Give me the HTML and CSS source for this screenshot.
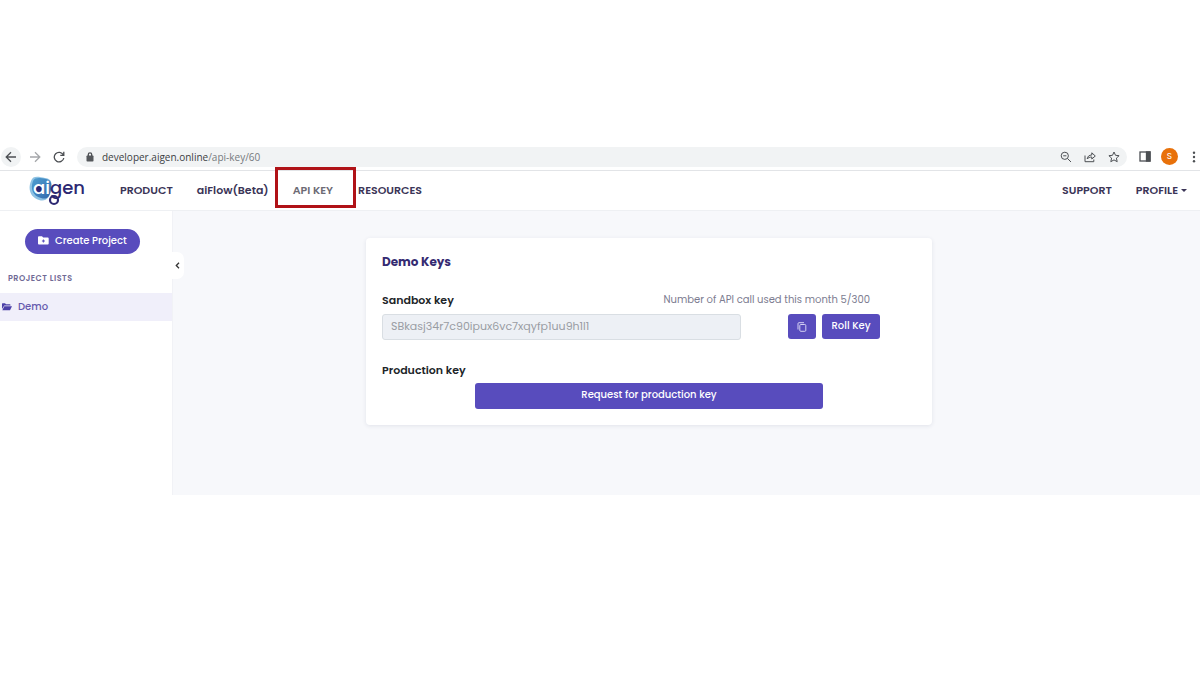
FILE: index.html
```html
<!DOCTYPE html>
<html lang="en">
<head>
  <meta charset="UTF-8" />
  <meta name="viewport" content="width=device-width, initial-scale=1.0" />
  <title>API Key</title>
  <link rel="stylesheet" href="styles.css">
</head>
<body>
  <header class="browser">
    <button class="tool back" aria-label="Back">
      <svg width="12" height="12" viewBox="0 0 12 12"><path d="M11 6H1.5M6 1.2 1.2 6 6 10.8" /></svg>
    </button>
    <button class="tool forward" aria-label="Forward">
      <svg width="12" height="12" viewBox="0 0 12 12"><path d="M1 6h9.5M6 1.2 10.8 6 6 10.8" /></svg>
    </button>
    <button class="tool reload" aria-label="Reload">
      <svg width="12" height="12" viewBox="0 0 12 12"><path d="M10.3 3.8A4.8 4.8 0 1 0 10.8 7M10.8 .8v3.5H7.3" /></svg>
    </button>
    <div class="address">
      <svg class="lock" width="8" height="10" viewBox="0 0 8 10"><rect x="0.5" y="3.5" width="7" height="6" rx="0.8" fill="#54575b" stroke="none" /><path d="M2.3 4V2.6a1.7 1.7 0 0 1 3.4 0V4" /></svg>
      <span class="url">developer.aigen.online<span>/api-key/60</span></span>
      <div class="actions">
        <svg width="12" height="12" viewBox="0 0 12 12"><circle cx="4.8" cy="4.8" r="3.6" /><path d="M7.5 7.5l3.500 3.500M3.200 4.800h3.200" /></svg>
        <svg width="12" height="12" viewBox="0 0 12 12"><path d="M1 4.500v6.200h8.800V8.500M3.200 8C3.500 5.500 5 4 7.800 4V1.800L11.300 5 7.800 8V6C5.600 6 4.200 6.700 3.200 8z" /></svg>
        <svg width="12" height="12" viewBox="0 0 12 12"><path d="M6 1l1.500 3.300 3.600.4-2.700 2.400.8 3.600L6 8.900l-3.200 1.800.8-3.600L.9 4.700l3.600-.4z" /></svg>
      </div>
    </div>
    <svg class="panel" width="12" height="11" viewBox="0 0 12 11"><rect x="1" y="1" width="10" height="9" /><path d="M7.500 1h3.500v9H7.500z" fill="#4c4f53" /></svg>
    <span class="avatar">S</span>
    <svg class="dots" width="4" height="12" viewBox="0 0 4 12"><circle cx="2" cy="1.800" r="1.200" /><circle cx="2" cy="6" r="1.200" /><circle cx="2" cy="10.200" r="1.200" /></svg>
  </header>

  <nav class="navbar">
    <a href="#" class="logo" aria-label="aigen">
      <svg width="58" height="32" viewBox="0 0 58 32">
        <defs>
          <linearGradient id="blob" x1="0" y1="0" x2="1" y2="1">
            <stop offset="0" stop-color="#4f9fd0" />
            <stop offset="1" stop-color="#3268ad" />
          </linearGradient>
        </defs>
        <path d="M3 7C5 1 11 3 17 4c7 1 7 5 6 11-1 9-5 13-12 11C4 24-1 17 3 7z" fill="#8ec2e3" />
        <path d="M5 7c2-4 7-3 13-2 5 1 6 4 5 10-1 8-4 11-10 9C5 22 2 15 5 7z" fill="url(#blob)" />
        <circle cx="11" cy="15" r="3" fill="#2c2872" />
        <circle cx="26" cy="26" r="4" fill="none" stroke="#2c2872" stroke-width="2.200" />
        <text x="5" y="20" class="logo-text">ai<tspan>gen</tspan></text>
      </svg>
    </a>
    <a href="#" class="product">PRODUCT</a>
    <a href="#" class="flow">aiFlow(Beta)</a>
    <a href="#" class="current">API KEY</a>
    <a href="#">RESOURCES</a>
    <div class="nav-right">
      <a href="#">SUPPORT</a>
      <a href="#" class="profile">PROFILE</a>
    </div>
  </nav>

  <div class="layout">
    <aside class="sidebar">
      <button class="create">
        <svg width="11" height="9" viewBox="0 0 11 9"><path d="M0 1.200Q0 .3.900.3H4l1.200 1.300h4.600q.9 0 .9.900v5q0 .9-.9.900H.9q-.9 0-.9-.9z" fill="#fff" /><path d="M5.400 3.500v3M3.900 5h3" stroke="#584cbd" /></svg>
        Create Project
      </button>
      <h2>PROJECT LISTS</h2>
      <a href="#" class="project">
        <svg width="10" height="8" viewBox="0 0 10 8"><path d="M0 6V.8Q0 .2.600.2H3l1 1h3.800q.7 0 .7.700v.6H2.300z" /><path d="M.3 7.300 2.300 3.200H10L8 7.300z" /></svg>
        Demo
      </a>
      <button class="collapse" aria-label="Collapse sidebar">
        <svg width="5" height="7" viewBox="0 0 5 7"><path d="M4 .8 1.300 3.500 4 6.200" /></svg>
      </button>
    </aside>

    <main class="content">
      <section class="card">
        <h1>Demo Keys</h1>
        <div class="key-head">
          <label for="sandbox">Sandbox key</label>
          <span class="usage">Number of API call used this month 5/300</span>
        </div>
        <div class="key-row">
          <input type="text" id="sandbox" value="SBkasj34r7c90ipux6vc7xqyfp1uu9h1l1" readonly>
          <div class="key-buttons">
            <button class="btn copy" aria-label="Copy key">
              <svg width="10" height="10" viewBox="0 0 10 10"><rect x="2.800" y="2.500" width="6" height="6.800" rx="1" /><path d="M1 7.500V1.700Q1 .7 2 .7h5" /></svg>
            </button>
            <button class="btn roll">Roll Key</button>
          </div>
        </div>
        <h3>Production key</h3>
        <button class="btn request">Request for production key</button>
      </section>
    </main>
  </div>
</body>
</html>
```
FILE: styles.css
```css
* {
  box-sizing: border-box;
  margin: 0;
}
body {
  padding-top: 143px;
  background: #fff;
  color: #212529;
  font-family: Poppins, Inter, sans-serif;
  font-size: 11px;
  line-height: 16px;
}
a {
  color: inherit;
  text-decoration: none;
}
button {
  border: 0;
  padding: 0;
  font: inherit;
  cursor: pointer;
}
svg {
  display: block;
  flex: none;
}

/* browser bar */
.browser {
  display: flex;
  align-items: center;
  height: 28px;
  padding-right: 4px;
  border-bottom: 1px solid #e2e4e7;
}
.browser svg {
  fill: none;
  stroke: #4c4f53;
  stroke-width: 1.3;
}
.tool {
  display: flex;
  align-items: center;
  justify-content: center;
  width: 20px;
  height: 20px;
  margin-right: 4px;
  border-radius: 50%;
  background: none;
}
.back {
  margin-left: 1px;
  background: #f1f3f4;
}
.browser .forward svg {
  stroke: #a5a7aa;
}
.address {
  display: flex;
  flex: 1;
  align-items: center;
  height: 20px;
  margin-left: 4px;
  padding: 0 7px 0 9px;
  border-radius: 10px;
  background: #f1f3f4;
}
.url {
  margin-left: 8px;
  color: #3c4043;
  font-family: "Open Sans", sans-serif;
  font-size: 10px;
}
.url span {
  color: #75797d;
}
.browser .actions svg {
  stroke-width: 1;
}
.actions {
  display: flex;
  gap: 12px;
  margin-left: auto;
}
.panel {
  margin: 0 10px 0 12px;
}
.avatar {
  width: 17px;
  height: 17px;
  border-radius: 50%;
  background: #e8710a;
  color: #fff;
  font-size: 9px;
  line-height: 17px;
  text-align: center;
}
.browser .dots {
  margin-left: 14px;
  fill: #4c4f53;
  stroke: none;
}

/* site navigation */
.navbar {
  display: flex;
  align-items: center;
  height: 40px;
  padding: 0 13px 2px 28px;
  border-bottom: 1px solid #eef0f3;
  color: #3b3557;
  font-weight: 600;
}
.logo-text {
  font-size: 18px;
  font-weight: 500;
  fill: #fff;
}
.logo-text tspan {
  fill: #2c2872;
}
.product {
  margin: 0 24px 0 34px;
}
.current {
  position: relative;
  margin: 0 25px 0 24px;
  color: #6d6b75;
}
.current::after {
  content: "";
  position: absolute;
  inset: -15px -23px -10px -18px;
  border: 3px solid #b01217;
}
.nav-right {
  display: flex;
  gap: 24px;
  margin-left: auto;
}
.profile::after {
  content: "";
  display: inline-block;
  margin-left: 3px;
  border: 3px solid transparent;
  border-top-color: #3b3557;
  border-bottom: 0;
  vertical-align: 2px;
}

/* page body */
.layout {
  display: flex;
  min-height: 284px;
}
.sidebar {
  position: relative;
  width: 173px;
  padding-top: 18px;
  border-right: 1px solid #f1f2f6;
}
.create {
  display: flex;
  align-items: center;
  gap: 6px;
  height: 25px;
  margin-left: 25px;
  padding: 0 13px 2px;
  border-radius: 13px;
  background: #584cbd;
  color: #fff;
  font-size: 10px;
  font-weight: 500;
}
.sidebar h2 {
  margin: 17px 0 6px 8px;
  color: #706a96;
  font-size: 8px;
  font-weight: 600;
  letter-spacing: 0.5px;
}
.project {
  display: flex;
  align-items: center;
  gap: 6px;
  height: 28px;
  padding-left: 2px;
  background: #f0effa;
  color: #6459ad;
  font-size: 10px;
  font-weight: 500;
}
.project svg {
  fill: #4c40a8;
}
.collapse {
  position: absolute;
  top: 41px;
  right: -12px;
  display: flex;
  align-items: center;
  justify-content: center;
  width: 14px;
  height: 27px;
  border-radius: 0 7px 7px 0;
  background: #fff;
}
.collapse svg {
  fill: none;
  stroke: #333;
  stroke-width: 1.3;
}
.content {
  flex: 1;
  padding: 27px 268px 69px 193px;
  background: #f7f8fb;
}

.card {
  padding: 16px;
  border-radius: 4px;
  background: #fff;
  box-shadow: 0 1px 4px rgba(40, 50, 90, 0.1);
}
.card h1 {
  margin-bottom: 22px;
  color: #352b72;
  font-size: 12px;
  font-weight: 700;
}
.key-head {
  display: flex;
  justify-content: space-between;
  margin-bottom: 6px;
  padding-right: 46px;
}
.card label,
.card h3 {
  font-size: 11px;
  font-weight: 600;
}
.usage {
  color: #7c7c90;
  font-size: 10px;
}
.key-row {
  display: flex;
  justify-content: space-between;
  padding-right: 36px;
}
.key-row input {
  width: 72%;
  height: 26px;
  padding: 0 8px 2px;
  border: 1px solid #d9dee3;
  border-radius: 3px;
  background: #edf0f5;
  color: #999ca3;
  font: inherit;
}
.key-buttons {
  display: flex;
  gap: 6px;
}
.btn {
  height: 25px;
  padding-bottom: 2px;
  border-radius: 3px;
  background: #584cbd;
  color: #fff;
  font-size: 10px;
  font-weight: 500;
}
.copy {
  display: flex;
  align-items: center;
  justify-content: center;
  width: 28px;
  padding: 0;
}
.copy svg {
  fill: none;
  stroke: #d5d1f3;
}
.roll {
  width: 58px;
}
.card h3 {
  margin: 22px 0 5px;
}
.request {
  display: block;
  width: 65%;
  height: 26px;
  margin: 0 auto;
}
```
